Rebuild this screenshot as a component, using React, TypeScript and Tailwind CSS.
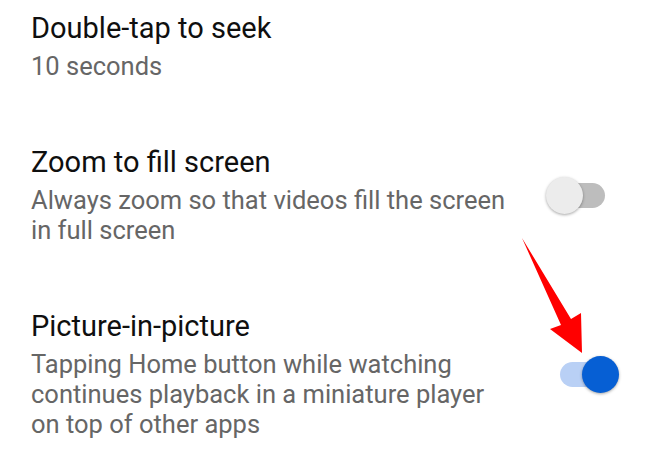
function Toggle({ on }: { on: boolean }) {
  return (
    <div className="relative h-[25px] w-[45px] shrink-0">
      <div className={on ? 'h-full w-full rounded-full bg-[#b9d0f5]' : 'h-full w-full rounded-full bg-[#bdbdbd]'} />
      <div
        className={
          on
            ? 'absolute top-[-6px] right-[-14px] h-[37px] w-[37px] rounded-full bg-[#065fd4] shadow-[0_1px_3px_rgba(0,0,0,0.35)]'
            : 'absolute top-[-6px] left-[-14px] h-[37px] w-[37px] rounded-full bg-[#ececec] shadow-[0_1px_3px_rgba(0,0,0,0.35)]'
        }
      />
    </div>
  );
}

function SettingRow({ title, subtitle, toggle }: { title: string; subtitle: string; toggle?: boolean }) {
  return (
    <div className="flex items-center">
      <div className="w-[479px]">
        <div className="text-[29px] leading-[34px] text-[#0f0f0f]">{title}</div>
        <div className="mt-[6px] text-[25.5px] leading-[30px] text-[#666666]">{subtitle}</div>
      </div>
      {toggle !== undefined && (
        <div className="ml-[50px]">
          <Toggle on={toggle} />
        </div>
      )}
    </div>
  );
}

export default function App() {
  return (
    <div
      className="relative h-[458px] w-[650px] overflow-hidden bg-white pl-[31px] pt-[11px]"
      style={{ fontFamily: 'Roboto, "Noto Sans", sans-serif' }}
    >
      <div className="flex flex-col gap-[64px]">
        <SettingRow title="Double-tap to seek" subtitle="10 seconds" />
        <SettingRow title="Zoom to fill screen" subtitle="Always zoom so that videos fill the screen in full screen" toggle={false} />
        <SettingRow
          title="Picture-in-picture"
          subtitle="Tapping Home button while watching continues playback in a miniature player on top of other apps"
          toggle={true}
        />
      </div>

      {/* red pointer arrow */}
      <svg className="absolute left-0 top-0" width="650" height="458" viewBox="0 0 650 458">
        <polygon points="522,238 571,319 581,313 582,353 550,329 561,325" fill="#ff0000" />
      </svg>
    </div>
  );
}
